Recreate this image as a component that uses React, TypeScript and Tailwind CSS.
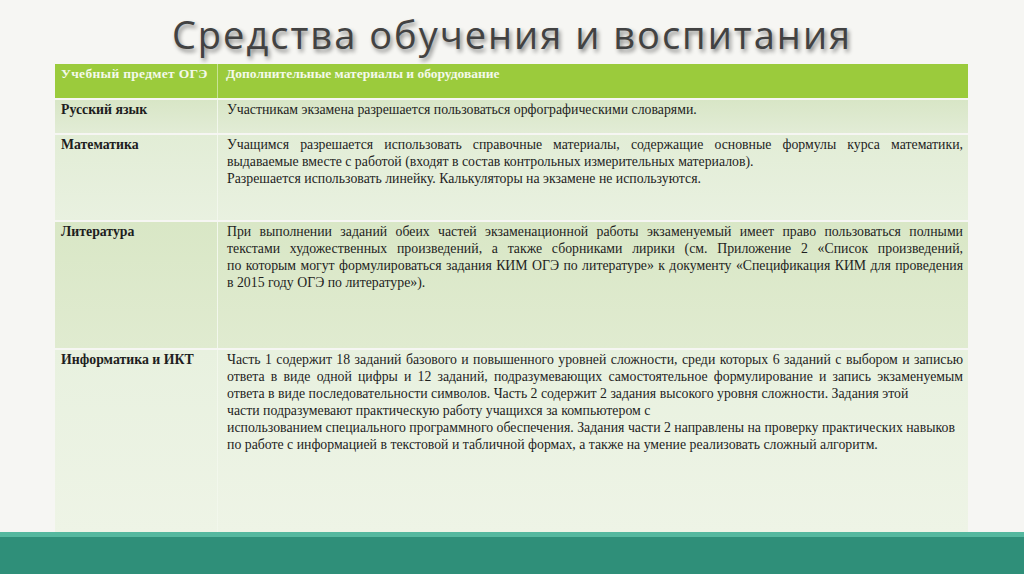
const serif = { fontFamily: '"Liberation Serif", "Times New Roman", serif' };

type Line = { text: string; justify?: boolean };

const ROWS: { subject: string; bg: string; height: string; lines: Line[] }[] = [
  {
    subject: 'Русский язык',
    bg: 'bg-gradient-to-b from-[#d8e6c6] to-[#e2ecd6]',
    height: 'h-[33px]',
    lines: [{ text: 'Участникам экзамена разрешается пользоваться орфографическими словарями.' }],
  },
  {
    subject: 'Математика',
    bg: 'bg-gradient-to-b from-[#e2edd6] to-[#e9f1e0]',
    height: 'h-[85px]',
    lines: [
      {
        text: 'Учащимся разрешается использовать справочные материалы, содержащие основные формулы курса математики,',
        justify: true,
      },
      { text: 'выдаваемые вместе с работой (входят в состав контрольных измерительных материалов).' },
      { text: 'Разрешается использовать линейку. Калькуляторы на экзамене не используются.' },
    ],
  },
  {
    subject: 'Литература',
    bg: 'bg-gradient-to-b from-[#d9e7c6] to-[#e0ebd0]',
    height: 'h-[126px]',
    lines: [
      {
        text: 'При выполнении заданий обеих частей экзаменационной работы экзаменуемый имеет право пользоваться полными',
        justify: true,
      },
      {
        text: 'текстами художественных произведений, а также сборниками лирики (см. Приложение 2 «Список произведений,',
        justify: true,
      },
      {
        text: 'по которым могут формулироваться задания КИМ ОГЭ по литературе» к документу «Спецификация КИМ для проведения',
        justify: true,
      },
      { text: 'в 2015 году ОГЭ по литературе»).' },
    ],
  },
  {
    subject: 'Информатика и ИКТ',
    bg: 'bg-gradient-to-b from-[#e8f1df] to-[#eef4e6]',
    height: 'h-[182px]',
    lines: [
      {
        text: 'Часть 1 содержит 18 заданий базового и повышенного уровней сложности, среди которых 6 заданий с выбором и записью',
        justify: true,
      },
      {
        text: 'ответа в виде одной цифры и 12 заданий, подразумевающих самостоятельное формулирование и запись экзаменуемым',
        justify: true,
      },
      { text: 'ответа в виде последовательности символов. Часть 2 содержит 2 задания высокого уровня сложности. Задания этой' },
      { text: 'части подразумевают практическую работу учащихся за компьютером с' },
      {
        text: 'использованием специального программного обеспечения. Задания части 2 направлены на проверку практических навыков',
      },
      { text: 'по работе с информацией в текстовой и табличной формах, а также на умение реализовать сложный алгоритм.' },
    ],
  },
];

export default function App() {
  return (
    <div className="flex h-[574px] w-[1024px] flex-col overflow-hidden bg-[#f6f6f3]">
      <h1
        className="flex h-[64px] items-start justify-center pt-[10px] text-[38px] leading-[48px] tracking-[2px] text-[#424242] [text-shadow:2px_3px_4px_rgba(0,0,0,0.45)]"
        style={{ fontFamily: '"Open Sans", "Liberation Sans", sans-serif' }}
      >
        Средства обучения и воспитания
      </h1>

      <div className="mx-[55px] flex w-[913px] flex-col gap-[2px]" style={serif}>
        <div className="flex h-[34px] bg-[#9bcb3c] text-[13.5px] font-bold leading-[16px] text-[#f4f9ea]">
          <div className="w-[162px] whitespace-nowrap pl-[6px] pt-[2px] tracking-[0.3px]">Учебный предмет ОГЭ</div>
          <div className="w-[1px] bg-[#c8e396]" />
          <div className="flex-1 pl-[8px] pt-[2px]">Дополнительные материалы и оборудование</div>
        </div>

        {ROWS.map((row) => (
          <div key={row.subject} className={`flex ${row.height} ${row.bg} text-[13.8px] leading-[17px] text-[#1e1e1e]`}>
            <div className="w-[162px] pl-[6px] pt-[1px] font-bold">{row.subject}</div>
            <div className="w-[1px] bg-[#f2f7ec]" />
            <div className="flex-1 pl-[9px] pr-[5px] pt-[1px]">
              {row.lines.map((l, i) => (
                <div
                  key={i}
                  className={l.justify ? 'text-justify [text-align-last:justify]' : 'whitespace-nowrap'}
                >
                  {l.text}
                </div>
              ))}
            </div>
          </div>
        ))}
      </div>

      <div className="mt-auto h-[5px] bg-[#55b89f]" />
      <div className="h-[37px] bg-[#2f8f79]" />
    </div>
  );
}
